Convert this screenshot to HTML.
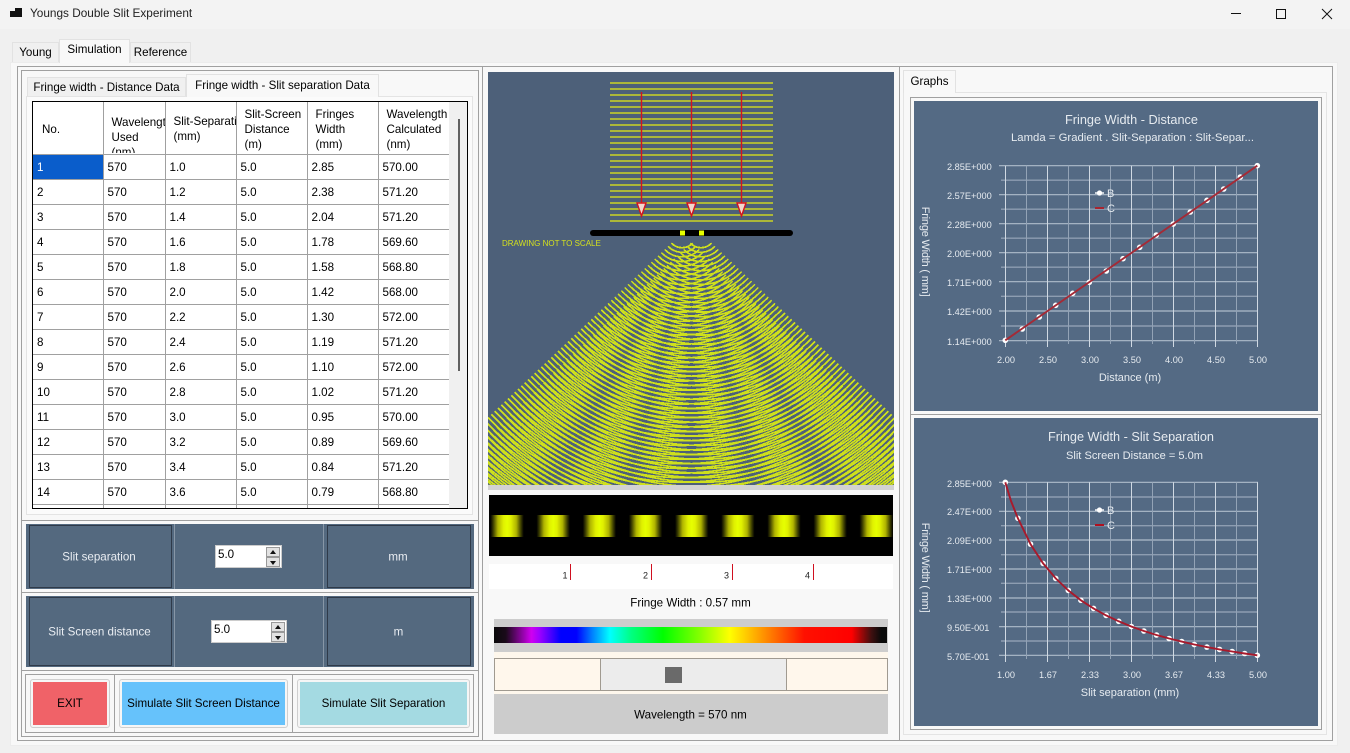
<!DOCTYPE html>
<html><head><meta charset="utf-8"><title>Youngs Double Slit Experiment</title>
<style>
*{box-sizing:border-box}
html,body{margin:0;padding:0}
body{width:1350px;height:753px;position:relative;overflow:hidden;background:#f0f0f0;font:11.6px/15px "Liberation Sans",sans-serif;color:#000}
.a{position:absolute}
.t{position:absolute;white-space:nowrap;text-align:center;transform:translate(-50%,-50%)}
.tab{position:absolute;background:#f0f0f0;border:1px solid #e2e2e2;border-bottom:0;text-align:center;white-space:nowrap}
.on{background:#f8f8f8}
.box{position:absolute;border:1px solid #a0a0a0}
.p{position:absolute;background:#54697f}
.c{position:absolute;border:1px solid #2f3a49;background:#54697f}
.w{color:#e9edf2}
table{border-collapse:collapse;table-layout:fixed;position:absolute;left:0;top:0;width:416px;background:#fff}
td,th{border:1px solid #a0a0a0;font-weight:400;text-align:left;padding:2px 0 0 4px;height:25px;white-space:nowrap;overflow:hidden}
th{height:52px;padding:0;vertical-align:top;border-top:0}
th div{height:51px;overflow:hidden;padding-left:8px}
td:first-child,th:first-child{border-left:0}
.spin{position:absolute;background:#fff;border:1px solid #ccc}
.ub{position:absolute;width:14px;height:10px;background:#e2e2e2;border:1px solid #999}
.ub i{position:absolute;left:3px;width:0;height:0;border-left:3px solid transparent;border-right:3px solid transparent}
.up i{top:2px;border-bottom:4px solid #111}
.dn i{top:3px;border-top:4px solid #111}
.btn{position:absolute;border:1px solid #cfcfcf;border-radius:3px;padding:2px;background:#f6f6f6}
.btn b{display:block;height:100%;font-weight:400;text-align:center;line-height:43px;white-space:nowrap}
.wave{position:absolute;left:488px;top:233px;width:406px;height:252px}
</style></head>
<body>
<!-- title bar -->
<div class="a" style="left:0;top:0;width:1350px;height:29px;background:#f3f3f3"></div>
<div class="a" style="left:10px;top:11px;width:5px;height:6px;background:#111"></div>
<div class="a" style="left:15px;top:8px;width:7px;height:9px;background:#111"></div>
<div class="a" style="left:30px;top:6px;font-size:11.8px;white-space:nowrap;color:#222">Youngs Double Slit Experiment</div>
<svg class="a" style="left:1225px;top:5px" width="115" height="20" fill="none" stroke="#111" stroke-width="1"><path d="M6 8.5H16"/><rect x="51.5" y="4.5" width="9" height="9"/><path d="M97 4L107 14M107 4L97 14"/></svg>

<!-- main tabs -->
<div class="a" style="left:10px;top:62px;width:1328px;height:684px;background:#f8f8f8;border:1px solid #ececec"></div>
<div class="tab" style="left:12px;top:42px;width:47px;height:20px;line-height:20px">Young</div>
<div class="tab on" style="left:59px;top:39px;width:71px;height:24px;line-height:20px;border-bottom:0">Simulation</div>
<div class="tab" style="left:130px;top:42px;width:61px;height:20px;line-height:20px">Reference</div>

<!-- outer grid -->
<div class="box" style="left:17px;top:66px;width:1316px;height:675px"></div>
<div class="box" style="left:21px;top:70px;width:458px;height:667px"></div>
<div class="a" style="left:482px;top:66px;width:1px;height:675px;background:#a0a0a0"></div>
<div class="a" style="left:899px;top:66px;width:1px;height:675px;background:#a0a0a0"></div>

<!-- data tabs -->
<div class="a" style="left:26px;top:96px;width:447px;height:419px;border:1px solid #e4e4e4;background:#fbfbfb"></div>
<div class="tab" style="left:27px;top:77px;width:159px;height:19px;line-height:19px">Fringe width - Distance Data</div>
<div class="tab on" style="left:186px;top:74px;width:193px;height:23px;line-height:21px;border-bottom:0">Fringe width - Slit separation Data</div>

<!-- table -->
<div class="a" style="left:32px;top:101px;width:436px;height:408px;border:1px solid #000;overflow:hidden;background:#fff">
<table><colgroup><col style="width:70px"><col style="width:62px"><col style="width:71px"><col style="width:71px"><col style="width:71px"><col style="width:71px"></colgroup>
<tr>
<th><div style="padding-top:20px;padding-left:9px">No.</div></th>
<th><div style="padding-top:13px">Wavelength<br>Used<br>(nm)</div></th>
<th><div style="padding-top:12px">Slit-Separation<br>(mm)</div></th>
<th><div style="padding-top:5px">Slit-Screen<br>Distance<br>(m)</div></th>
<th><div style="padding-top:5px">Fringes<br>Width<br>(mm)</div></th>
<th><div style="padding-top:5px">Wavelength<br>Calculated<br>(nm)</div></th>
</tr>
<tr><td style="background:#0a5dcb;color:#fff">1</td><td>570</td><td>1.0</td><td>5.0</td><td>2.85</td><td>570.00</td></tr>
<tr><td>2</td><td>570</td><td>1.2</td><td>5.0</td><td>2.38</td><td>571.20</td></tr>
<tr><td>3</td><td>570</td><td>1.4</td><td>5.0</td><td>2.04</td><td>571.20</td></tr>
<tr><td>4</td><td>570</td><td>1.6</td><td>5.0</td><td>1.78</td><td>569.60</td></tr>
<tr><td>5</td><td>570</td><td>1.8</td><td>5.0</td><td>1.58</td><td>568.80</td></tr>
<tr><td>6</td><td>570</td><td>2.0</td><td>5.0</td><td>1.42</td><td>568.00</td></tr>
<tr><td>7</td><td>570</td><td>2.2</td><td>5.0</td><td>1.30</td><td>572.00</td></tr>
<tr><td>8</td><td>570</td><td>2.4</td><td>5.0</td><td>1.19</td><td>571.20</td></tr>
<tr><td>9</td><td>570</td><td>2.6</td><td>5.0</td><td>1.10</td><td>572.00</td></tr>
<tr><td>10</td><td>570</td><td>2.8</td><td>5.0</td><td>1.02</td><td>571.20</td></tr>
<tr><td>11</td><td>570</td><td>3.0</td><td>5.0</td><td>0.95</td><td>570.00</td></tr>
<tr><td>12</td><td>570</td><td>3.2</td><td>5.0</td><td>0.89</td><td>569.60</td></tr>
<tr><td>13</td><td>570</td><td>3.4</td><td>5.0</td><td>0.84</td><td>571.20</td></tr>
<tr><td>14</td><td>570</td><td>3.6</td><td>5.0</td><td>0.79</td><td>568.80</td></tr>
<tr><td></td><td></td><td></td><td></td><td></td><td></td></tr>
</table>
<div class="a" style="left:416px;top:0;width:18px;height:406px;background:#f0f0f0"></div>
<div class="a" style="left:425px;top:17px;width:2px;height:252px;background:#606060"></div>
</div>

<!-- separators left -->
<div class="a" style="left:21px;top:520px;width:458px;height:1px;background:#a0a0a0"></div>
<div class="a" style="left:21px;top:592px;width:458px;height:1px;background:#a0a0a0"></div>
<div class="a" style="left:21px;top:670px;width:458px;height:1px;background:#a0a0a0"></div>

<!-- row 1 -->
<div class="p" style="left:26px;top:524px;width:448px;height:65px"></div>
<div class="c" style="left:29px;top:525px;width:143px;height:63px"></div>
<div class="c" style="left:327px;top:525px;width:144px;height:63px"></div>
<div class="a" style="left:174px;top:524px;width:1px;height:65px;background:#8796a6"></div>
<div class="a" style="left:323px;top:524px;width:1px;height:65px;background:#8796a6"></div>
<div class="t w" style="left:99px;top:557px">Slit separation</div>
<div class="t w" style="left:398px;top:557px">mm</div>
<div class="spin" style="left:215px;top:545px;width:67px;height:23px"><span class="a" style="left:2px;top:1px">5.0</span>
<div class="ub up" style="left:50px;top:1px"><i></i></div><div class="ub dn" style="left:50px;top:11px"><i></i></div></div>

<!-- row 2 -->
<div class="p" style="left:26px;top:596px;width:448px;height:71px"></div>
<div class="c" style="left:29px;top:597px;width:143px;height:69px"></div>
<div class="c" style="left:327px;top:597px;width:144px;height:69px"></div>
<div class="a" style="left:174px;top:596px;width:1px;height:71px;background:#8796a6"></div>
<div class="a" style="left:323px;top:596px;width:1px;height:71px;background:#8796a6"></div>
<div class="t w" style="left:99.5px;top:632px">Slit Screen distance</div>
<div class="t w" style="left:398.5px;top:632px">m</div>
<div class="spin" style="left:211px;top:620px;width:76px;height:23px"><span class="a" style="left:2px;top:1px">5.0</span>
<div class="ub up" style="left:59px;top:1px"><i></i></div><div class="ub dn" style="left:59px;top:11px"><i></i></div></div>

<!-- row 3 -->
<div class="box" style="left:25px;top:674px;width:449px;height:59px"></div>
<div class="a" style="left:114px;top:674px;width:1px;height:59px;background:#a0a0a0"></div>
<div class="a" style="left:292px;top:674px;width:1px;height:59px;background:#a0a0a0"></div>
<div class="btn" style="left:30px;top:679px;width:80px;height:49px"><b style="background:#f06268">EXIT</b></div>
<div class="btn" style="left:119px;top:679px;width:169px;height:49px"><b style="background:#66c2fb">Simulate Slit Screen Distance</b></div>
<div class="btn" style="left:297px;top:679px;width:173px;height:49px"><b style="background:#a4dae2">Simulate Slit Separation</b></div>

<!-- center -->
<div class="a" style="left:488px;top:72px;width:406px;height:413px;background:#4d6079"></div>
<div class="a" style="left:488px;top:485px;width:406px;height:5px;background:#d2d2d2"></div>
<div class="wave" style="background:repeating-radial-gradient(circle at 194px 0,#cfe01c 0,#cfe01c 1.7px,transparent 1.7px,transparent 4.6px);clip-path:polygon(194px 0,459px 252px,-71px 252px);-webkit-mask-image:radial-gradient(circle at 194px 0,transparent 11px,#000 11px);mask-image:radial-gradient(circle at 194px 0,transparent 11px,#000 11px)"></div>
<div class="wave" style="background:repeating-radial-gradient(circle at 213px 0,#cfe01c 0,#cfe01c 1.7px,transparent 1.7px,transparent 4.6px);clip-path:polygon(213px 0,478px 252px,-52px 252px);-webkit-mask-image:radial-gradient(circle at 213px 0,transparent 11px,#000 11px);mask-image:radial-gradient(circle at 213px 0,transparent 11px,#000 11px)"></div>
<div class="a" style="left:502px;top:239px;font-size:8px;line-height:10px;color:#d4e01e;white-space:nowrap">DRAWING NOT TO SCALE</div>

<svg class="a" style="left:0;top:0" width="1350" height="753">
<path fill="none" stroke="#cbd424" stroke-width="1.6" d="M610 83H773M610 89H773M610 95H773M610 101H773M610 107H773M610 113H773M610 119H773M610 125H773M610 131H773M610 137H773M610 143H773M610 149H773M610 155H773M610 161H773M610 167H773M610 173H773M610 179H773M610 185H773M610 191H773M610 197H773M610 203H773M610 209H773M610 215H773M610 221H773"/>
<g stroke="#d4141e" stroke-width="1.4" fill="#f2d8cc">
<path d="M641.5 92V203M691.5 92V203M741.5 92V203" fill="none"/>
<path d="M637 203H646L641.5 216Z"/><path d="M687 203H696L691.5 216Z"/><path d="M737 203H746L741.5 216Z"/>
</g>
<rect x="590" y="230" width="203" height="6" rx="3" fill="#000"/>
<rect x="680" y="230.5" width="5" height="5" fill="#e6ff00"/><rect x="699" y="230.5" width="5" height="5" fill="#e6ff00"/>
</svg>

<div class="a" style="left:489px;top:495px;width:404px;height:61px;background:#000"></div>
<div class="a" style="left:489px;top:515px;width:404px;height:22px;background:linear-gradient(90deg,#000 0,#000 14%,#3c3e00 20%,#b0b400 30%,#e0f000 42%,#e6ff00 50%,#e0f000 58%,#b0b400 70%,#3c3e00 80%,#000 86%,#000 100%) -5px 0/46.17px 100% repeat-x"></div>
<div class="a" style="left:489px;top:564px;width:404px;height:25px;background:#fff"></div>
<div class="a" style="left:570px;top:564px;width:1px;height:16px;background:#d01020"></div>
<div class="a" style="left:651px;top:564px;width:1px;height:16px;background:#d01020"></div>
<div class="a" style="left:732px;top:564px;width:1px;height:16px;background:#d01020"></div>
<div class="a" style="left:813px;top:564px;width:1px;height:16px;background:#d01020"></div>
<div class="t" style="left:565px;top:576px;font-size:9px;color:#222">1</div>
<div class="t" style="left:645.5px;top:576px;font-size:9px;color:#222">2</div>
<div class="t" style="left:726.5px;top:576px;font-size:9px;color:#222">3</div>
<div class="t" style="left:807.5px;top:576px;font-size:9px;color:#222">4</div>
<div class="t" style="left:690.5px;top:603px">Fringe Width : 0.57 mm</div>

<div class="a" style="left:494px;top:619px;width:394px;height:115px;background:#fef7ec"></div>
<div class="a" style="left:494px;top:619px;width:394px;height:33px;background:#cdcdcd"></div>
<div class="a" style="left:494px;top:627px;width:393px;height:16px;background:linear-gradient(90deg,#0a0a0a 0,#1a0a1a 3%,#d000f0 9.5%,#a000ff 11.5%,#0000ff 17%,#0000ff 21%,#0080ff 25%,#00ffff 29.5%,#00ff80 35%,#00ff00 43%,#80ff00 52%,#ffff00 60%,#ff8000 70%,#ff1000 79%,#ff0000 91%,#401010 96%,#0a0a0a 98.5%,#0a0a0a 100%)"></div>
<div class="a" style="left:494px;top:658px;width:394px;height:33px;border:1px solid #a09a90;background:#fff7ec"></div>
<div class="a" style="left:600px;top:658px;width:187px;height:33px;border:1px solid #a09a90;background:#ececec"></div>
<div class="a" style="left:665px;top:667px;width:17px;height:16px;background:#6a6a6a"></div>
<div class="a" style="left:494px;top:694px;width:394px;height:40px;background:#ccc"></div>
<div class="t" style="left:690.5px;top:715px">Wavelength = 570 nm</div>

<!-- graphs -->
<div class="a" style="left:903px;top:92px;width:424px;height:643px;border:1px solid #e4e4e4"></div>
<div class="tab on" style="left:903px;top:70px;width:53px;height:23px;line-height:21px;border-bottom:0">Graphs</div>
<div class="box" style="left:910px;top:97px;width:412px;height:633px"></div>
<div class="a" style="left:910px;top:414px;width:412px;height:1px;background:#a0a0a0"></div>
<div class="a" style="left:914px;top:101px;width:404px;height:310px;background:#546a84"></div>
<div class="a" style="left:914px;top:418px;width:404px;height:308px;background:#546a84"></div>

<svg class="a" style="left:0;top:0;font-family:'Liberation Sans',sans-serif" width="1350" height="753" fill="#e6ebf0">
<!-- chart 1 grid -->
<path fill="none" stroke="#8d9db1" stroke-width="1.4" d="M1001 180.2H1258M1001 209.2H1258M1001 238.2H1258M1001 267.2H1258M1001 296.3H1258M1001 326H1258"/>
<path fill="none" stroke="#aebccb" stroke-width="1.2" d="M999 165.7H1258M999 194.7H1258M999 223.7H1258M999 252.7H1258M999 281.7H1258M999 311H1258M999 340.7H1258"/>
<path fill="none" stroke="#93a3b6" stroke-width="1" d="M1026.5 165.7V344M1068.5 165.7V344M1110.5 165.7V344M1152.5 165.7V344M1194.5 165.7V344M1236.5 165.7V344"/>
<path fill="none" stroke="#d0d9e3" stroke-width="1" d="M1005.5 165.7V347M1047.5 165.7V347M1089.5 165.7V347M1131.5 165.7V347M1173.5 165.7V347M1215.5 165.7V347M1257.5 165.7V347"/>
<g fill="#fff"><circle cx="1005.3" cy="340.3" r="2.8"/><circle cx="1022.3" cy="329" r="2.8"/><circle cx="1039.3" cy="317" r="2.8"/><circle cx="1055.7" cy="305.3" r="2.8"/><circle cx="1072.7" cy="293.3" r="2.8"/><circle cx="1089.3" cy="282.3" r="2.8"/><circle cx="1106.3" cy="271" r="2.8"/><circle cx="1123" cy="258.7" r="2.8"/><circle cx="1139.7" cy="247.3" r="2.8"/><circle cx="1156.3" cy="235" r="2.8"/><circle cx="1173.3" cy="224" r="2.8"/><circle cx="1190.3" cy="212" r="2.8"/><circle cx="1207" cy="200.3" r="2.8"/><circle cx="1223.7" cy="189" r="2.8"/><circle cx="1240.3" cy="177" r="2.8"/><circle cx="1257.3" cy="165.7" r="2.8"/></g>
<path fill="none" stroke="#a42a36" stroke-width="1.9" d="M1005.3 340.3L1257.3 165.7"/>
<path stroke="#fff" stroke-width="1.4" d="M1095 193H1104"/><circle cx="1099.5" cy="193" r="2.6" fill="#fff"/>
<path stroke="#a82530" stroke-width="2" d="M1095 208H1104"/>
<g font-size="11"><text x="1107" y="197">B</text><text x="1107" y="212">C</text></g>
<text x="1131.5" y="124" font-size="12.5" text-anchor="middle" textLength="133" lengthAdjust="spacingAndGlyphs">Fringe Width - Distance</text>
<text x="1011" y="141" font-size="11" textLength="243" lengthAdjust="spacingAndGlyphs">Lamda = Gradient . Slit-Separation  : Slit-Separ...</text>
<g font-size="9.2">
<text x="947" y="170">2.85E+000</text><text x="947" y="199">2.57E+000</text><text x="947" y="228">2.28E+000</text><text x="947" y="257">2.00E+000</text><text x="947" y="286">1.71E+000</text><text x="947" y="315">1.42E+000</text><text x="947" y="345">1.14E+000</text>
</g>
<g font-size="9.2" text-anchor="middle">
<text x="1006" y="363">2.00</text><text x="1048" y="363">2.50</text><text x="1090" y="363">3.00</text><text x="1132" y="363">3.50</text><text x="1174" y="363">4.00</text><text x="1216" y="363">4.50</text><text x="1258" y="363">5.00</text>
</g>
<text x="1130" y="381" font-size="11" text-anchor="middle">Distance (m)</text>
<text transform="translate(922 251.7) rotate(90)" font-size="11" text-anchor="middle" textLength="90">Fringe Width ( mm]</text>

<!-- chart 2 grid -->
<path fill="none" stroke="#8d9db1" stroke-width="1.4" d="M1001 497H1258M1001 525.7H1258M1001 554.7H1258M1001 583.3H1258M1001 612H1258M1001 641H1258"/>
<path fill="none" stroke="#aebccb" stroke-width="1.2" d="M999 482.3H1258M999 511.3H1258M999 540H1258M999 569H1258M999 598H1258M999 626.7H1258M999 655.3H1258"/>
<path fill="none" stroke="#93a3b6" stroke-width="1" d="M1026.5 482.3V659M1068.5 482.3V659M1110.5 482.3V659M1152.5 482.3V659M1194.5 482.3V659M1236.5 482.3V659"/>
<path fill="none" stroke="#d0d9e3" stroke-width="1" d="M1005.5 482.3V662M1047.5 482.3V662M1089.5 482.3V662M1131.5 482.3V662M1173.5 482.3V662M1215.5 482.3V662M1257.5 482.3V662"/>
<g fill="#fff"><circle cx="1005.3" cy="482.3" r="2.8"/><circle cx="1017.9" cy="518.3" r="2.8"/><circle cx="1030.5" cy="544.1" r="2.8"/><circle cx="1043.1" cy="563.4" r="2.8"/><circle cx="1055.7" cy="578.4" r="2.8"/><circle cx="1068.3" cy="590.4" r="2.8"/><circle cx="1080.9" cy="600.3" r="2.8"/><circle cx="1093.5" cy="608.4" r="2.8"/><circle cx="1106.1" cy="615.4" r="2.8"/><circle cx="1118.7" cy="621.3" r="2.8"/><circle cx="1131.3" cy="626.5" r="2.8"/><circle cx="1143.9" cy="631" r="2.8"/><circle cx="1156.5" cy="635" r="2.8"/><circle cx="1169.1" cy="638.5" r="2.8"/><circle cx="1181.7" cy="641.6" r="2.8"/><circle cx="1194.3" cy="644.5" r="2.8"/><circle cx="1206.9" cy="647.1" r="2.8"/><circle cx="1219.5" cy="649.4" r="2.8"/><circle cx="1232.1" cy="651.5" r="2.8"/><circle cx="1244.7" cy="653.5" r="2.8"/><circle cx="1257.3" cy="655.3" r="2.8"/></g>
<polyline fill="none" stroke="#a81a2c" stroke-width="1.9" points="1005.3,482.3 1011,501 1017.9,518.3 1030.5,544.1 1043.1,563.4 1055.7,578.4 1068.3,590.4 1080.9,600.3 1093.5,608.4 1106.1,615.4 1118.7,621.3 1131.3,626.5 1143.9,631 1156.5,635 1169.1,638.5 1181.7,641.6 1194.3,644.5 1206.9,647.1 1219.5,649.4 1232.1,651.5 1244.7,653.5 1257.3,655.3"/>
<path stroke="#fff" stroke-width="1.4" d="M1095 510H1104"/><circle cx="1099.5" cy="510" r="2.6" fill="#fff"/>
<path stroke="#b01020" stroke-width="2" d="M1095 525H1104"/>
<g font-size="11"><text x="1107" y="514">B</text><text x="1107" y="529">C</text></g>
<text x="1131" y="441" font-size="12.5" text-anchor="middle" textLength="166" lengthAdjust="spacingAndGlyphs">Fringe Width - Slit Separation</text>
<text x="1134.5" y="459" font-size="11" text-anchor="middle" textLength="137" lengthAdjust="spacingAndGlyphs">Slit Screen Distance = 5.0m</text>
<g font-size="9.2">
<text x="947" y="487">2.85E+000</text><text x="947" y="515">2.47E+000</text><text x="947" y="544">2.09E+000</text><text x="947" y="573">1.71E+000</text><text x="947" y="602">1.33E+000</text><text x="947" y="631">9.50E-001</text><text x="947" y="660">5.70E-001</text>
</g>
<g font-size="9.2" text-anchor="middle">
<text x="1006" y="678">1.00</text><text x="1048" y="678">1.67</text><text x="1090" y="678">2.33</text><text x="1132" y="678">3.00</text><text x="1174" y="678">3.67</text><text x="1216" y="678">4.33</text><text x="1258" y="678">5.00</text>
</g>
<text x="1130" y="696" font-size="11" text-anchor="middle">Slit separation (mm)</text>
<text transform="translate(922 567.7) rotate(90)" font-size="11" text-anchor="middle" textLength="90">Fringe Width ( mm]</text>
</svg>
</body></html>
